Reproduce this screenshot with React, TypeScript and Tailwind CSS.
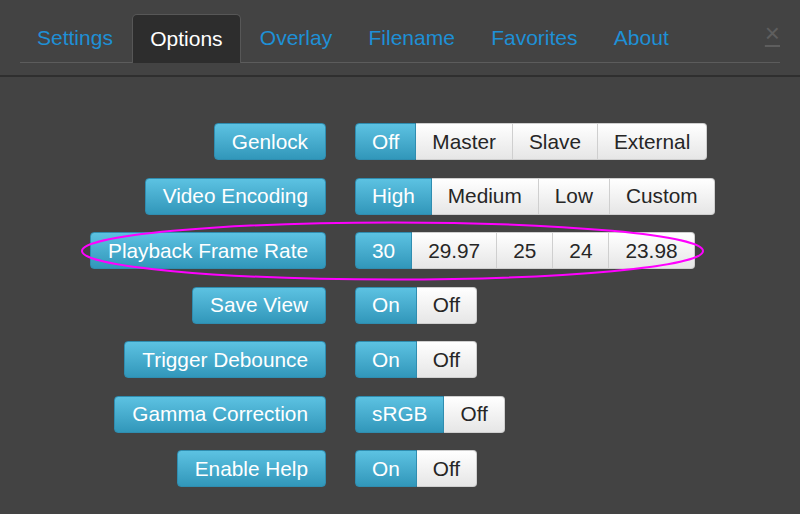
import React from "react";

const tabs = ["Settings", "Options", "Overlay", "Filename", "Favorites", "About"];

type Row = { label: string; options: string[] };

const rows: Row[] = [
  { label: "Genlock", options: ["Off", "Master", "Slave", "External"] },
  { label: "Video Encoding", options: ["High", "Medium", "Low", "Custom"] },
  { label: "Playback Frame Rate", options: ["30", "29.97", "25", "24", "23.98"] },
  { label: "Save View", options: ["On", "Off"] },
  { label: "Trigger Debounce", options: ["On", "Off"] },
  { label: "Gamma Correction", options: ["sRGB", "Off"] },
  { label: "Enable Help", options: ["On", "Off"] },
];

export default function App() {
  return (
    <div
      className="relative w-[800px] h-[514px] bg-[#434343] overflow-hidden text-white"
      style={{ fontFamily: '"Liberation Sans", Arial, sans-serif' }}
    >
      {/* Tab header */}
      <div className="pt-[13px] px-[20px]">
        <div className="flex items-end border-b border-[#5c5c5c]">
          {tabs.map((t) => {
            const active = t === "Options";
            return (
              <div
                key={t}
                className={
                  active
                    ? "px-[17px] mr-[2.3px] h-[49px] flex items-center text-[21px] text-white bg-[#2d2d2d] border border-b-0 border-[#575757] rounded-t-[5px] -mb-px"
                    : "px-[17px] mr-[2.3px] h-[49px] flex items-center text-[21px] text-[#1e90d6]"
                }
              >
                {t}
              </div>
            );
          })}
          <div className="ml-auto self-start mt-[9px] text-[26px] leading-[22px] text-[#5e5e5e] underline decoration-[2px] underline-offset-[3px]">
            ×
          </div>
        </div>
      </div>
      <div className="mt-[12px] h-[2px] bg-[#2f2f2f]" />

      {/* Rows */}
      <div className="mt-[46px] grid grid-cols-[326px_auto] gap-x-[29px] gap-y-[17.5px] justify-start">
        {rows.map((r) => (
          <React.Fragment key={r.label}>
            <div className="justify-self-end h-[37px] px-[17px] flex items-center text-[20.8px] text-white rounded-[4px] bg-gradient-to-b from-[#5cc2e2] to-[#3197ba] border border-[#2f8db0]">
              {r.label}
            </div>
            <div className="flex h-[37px] justify-self-start">
              {r.options.map((o, i) => {
                const sel = i === 0;
                const last = i === r.options.length - 1;
                return (
                  <div
                    key={o}
                    className={
                      (sel
                        ? "bg-gradient-to-b from-[#5cc2e2] to-[#3197ba] text-white border border-[#2f8db0] rounded-l-[4px] "
                        : "bg-gradient-to-b from-[#ffffff] to-[#e6e6e6] text-[#262626] border border-l-0 border-[#cfcfcf] ") +
                      (last ? "rounded-r-[4px] " : "") +
                      "px-[16px] flex items-center text-[20.8px]"
                    }
                  >
                    {o}
                  </div>
                );
              })}
            </div>
          </React.Fragment>
        ))}
      </div>

      {/* Annotation ellipse */}
      <svg className="absolute inset-0 pointer-events-none" width="800" height="514">
        <ellipse cx="392.5" cy="251" rx="310.5" ry="28.5" fill="none" stroke="#ff00ff" strokeWidth="2" />
      </svg>
    </div>
  );
}
